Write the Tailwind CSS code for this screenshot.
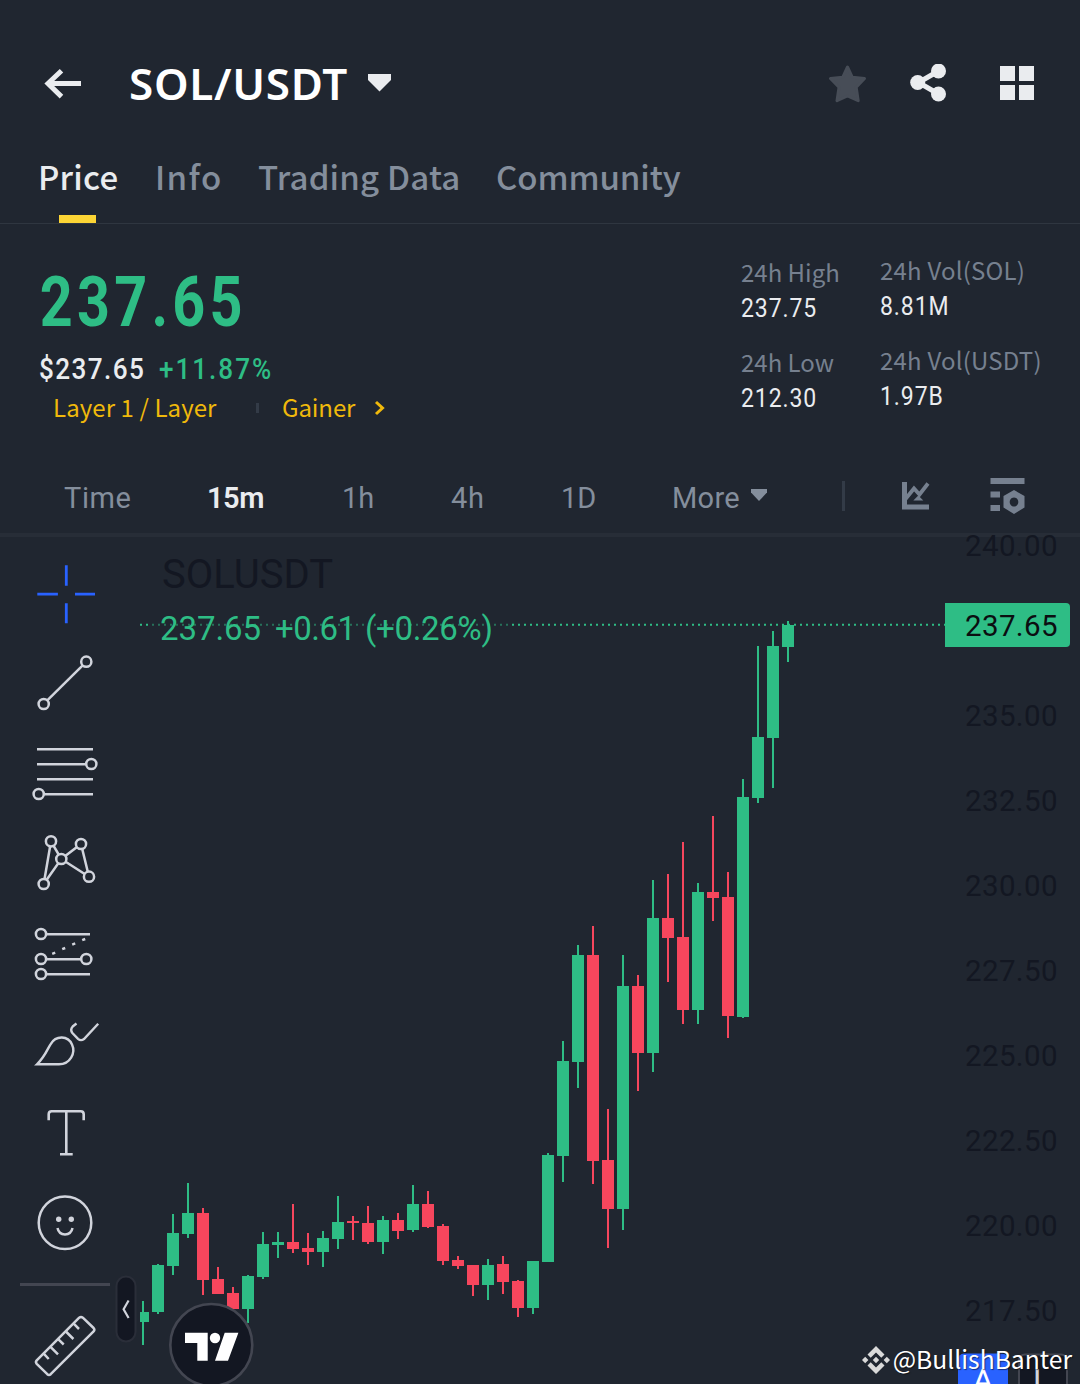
<!DOCTYPE html>
<html lang="en">
<head>
    <meta charset="UTF-8">
    <meta name="viewport" content="width=device-width, initial-scale=1.0">
    <title>SOL/USDT</title>
    <script src="https://cdn.jsdelivr.net/npm/@tailwindcss/browser@4"></script>
</head>
<body class="bg-[#202630] text-[#eaecef] w-[1080px] h-[1384px] overflow-hidden font-['Noto_Sans_CJK_SC',sans-serif]">
    <!-- Header -->
    <header class="flex items-center h-[140px] pt-[26px] pl-11 pr-[46px]">
        <svg class="mt-px w-[38px] h-[30px]" viewBox="0 0 38 30" fill="none" stroke="#eaecef" stroke-width="5">
            <path d="M37 14.5H5M17.5 1.8L4 14.5L17.5 27.6"/>
        </svg>
        <h1 class="ml-[47px] w-[239px] font-['Noto_Sans',sans-serif] text-[44px] leading-[56px] font-semibold text-white tracking-[0.7px]">SOL/USDT</h1>
        <svg class="w-6 h-[18px]" viewBox="0 0 24 18" fill="#eaecef"><path d="M0 0h23v6L11.5 17.5 0 6z"/></svg>
        <div class="ml-auto flex items-center">
            <svg class="mt-px w-[38px] h-[38px]" viewBox="0 0 38 38" fill="#474d57" stroke="#474d57" stroke-width="3" stroke-linejoin="round">
                <path d="M18.5 2l4.8 10.3 12.2 1.2-8.3 8.8 2 13.4L18.5 31 8 35.7l2-13.4L1.500 13.5l12.2-1.2z"/>
            </svg>
            <svg class="ml-[43px] w-[38px] h-[38px]" viewBox="0 0 38 38" fill="#eaecef">
                <path d="M28.500 7L8.500 18.500L28.500 30" fill="none" stroke="#eaecef" stroke-width="5"/>
                <circle cx="7.700" cy="18.500" r="7.500"/><circle cx="28.500" cy="7" r="7.500"/><circle cx="28.500" cy="30" r="7.500"/>
            </svg>
            <div class="ml-[52px] grid grid-cols-2 gap-1">
                <i class="size-[15px] bg-[#eaecef]"></i><i class="size-[15px] bg-[#eaecef]"></i>
                <i class="size-[15px] bg-[#eaecef]"></i><i class="size-[15px] bg-[#eaecef]"></i>
            </div>
        </div>
    </header>

    <!-- Tabs -->
    <nav class="flex h-[84px] pl-[38px] border-b border-[#2f3640] text-[33px] leading-[72px] font-medium text-[#848e9c]">
        <div class="relative w-[117px] text-[#eaecef] tracking-[0.2px]">Price<i class="absolute left-[21px] bottom-0 w-[37px] h-2 bg-[#fcd535]"></i></div>
        <div class="w-[103px] tracking-[1.4px]">Info</div>
        <div class="w-[238px] tracking-[0.2px]">Trading Data</div>
        <div class="tracking-[-0.1px]">Community</div>
    </nav>

    <!-- Price summary -->
    <section class="flex h-[236px] pl-[39px]">
        <div class="w-[702px] pt-[38px]">
            <div class="font-[Roboto,sans-serif] font-bold text-[71px] leading-[80px] tracking-[5.2px] text-[#2ebd85] origin-left scale-x-[.81] pl-px">237.65</div>
            <div class="flex mt-[9px] font-[Roboto,sans-serif] font-medium text-[29px] leading-[36px]">
                <div class="w-[120px] tracking-[1.6px] origin-left scale-x-[.9]">$237.65</div>
                <div class="tracking-[2.2px] origin-left scale-x-[.9] text-[#2ebd85]">+11.87%</div>
            </div>
            <div class="flex items-center h-[42px] pl-[14px] text-[24px] leading-[42px] tracking-[0.1px] text-[#f0b90b]">
                <div class="w-[203px] -mt-[2px]">Layer 1 / Layer</div>
                <i class="w-[3px] h-[10px] bg-[#333b47]"></i>
                <div class="ml-[23px] w-[92px] -mt-[2px] tracking-[-0.1px]">Gainer</div>
                <svg class="w-3 h-4" viewBox="0 0 12 16" fill="none" stroke="#f0b90b" stroke-width="3"><path d="M2 2l6.5 6L2 14"/></svg>
            </div>
        </div>
        <div class="w-[139px] pt-[30px]">
            <div class="text-[24px] leading-[36px] text-[#76808f]">24h High</div>
            <div class="mt-[2px] font-[Roboto,sans-serif] text-[25px] leading-[34px] h-[52px] tracking-[1px] origin-left scale-x-[.92]">237.75</div>
            <div class="text-[24px] leading-[36px] text-[#76808f]">24h Low</div>
            <div class="mt-[2px] font-[Roboto,sans-serif] text-[25px] leading-[34px] tracking-[1px] origin-left scale-x-[.92]">212.30</div>
        </div>
        <div class="pt-[28px] tracking-[0.2px]">
            <div class="text-[24px] leading-[36px] text-[#76808f]">24h Vol(SOL)</div>
            <div class="mt-[2px] font-[Roboto,sans-serif] text-[25px] leading-[34px] h-[52px] tracking-[1px] origin-left scale-x-[.92]">8.81M</div>
            <div class="text-[24px] leading-[36px] text-[#76808f]">24h Vol(USDT)</div>
            <div class="mt-[2px] font-[Roboto,sans-serif] text-[25px] leading-[34px] tracking-[1px] origin-left scale-x-[.92]">1.97B</div>
        </div>
    </section>

    <!-- Interval bar -->
    <div class="flex items-center h-[77px] pl-16 border-b-4 border-[#272d37] font-[Roboto,sans-serif] text-[29px] leading-[70px] text-[#848e9c] tracking-[0.6px]">
        <div class="w-[143px] pt-[3px]">Time</div>
        <div class="w-[135px] pt-[3px] font-semibold text-[#eaecef] tracking-[-0.5px]">15m</div>
        <div class="w-[109px] pt-[3px] tracking-[0px]">1h</div>
        <div class="w-[110px] pt-[3px]">4h</div>
        <div class="w-[111px] pt-[3px] tracking-[0px]">1D</div>
        <div class="w-[79px] pt-[3px] tracking-[0.3px]">More</div>
        <svg class="mb-[3px] w-4 h-3" viewBox="0 0 16 12" fill="#848e9c"><path d="M0 0h16v3.5L8 12 0 3.5z"/></svg>
        <i class="mb-[2px] ml-[75px] w-[3px] h-[30px] bg-[#333b47]"></i>
        <svg class="mb-[2px] ml-[57px] w-7 h-7" viewBox="0 0 28 28" fill="none" stroke="#76808f">
            <path d="M2.5 0v25H27" stroke-width="5"/>
            <path d="M3.5 17L12 6.5l5.5 6L26 1.5" stroke-width="3.8"/>
            <path d="M16.3 13.5l5 5h-10z" fill="#76808f" stroke="none"/>
        </svg>
        <svg class="mb-px ml-[60px] w-[35px] h-9" viewBox="0 0 35 36" fill="#76808f">
            <path d="M.5 0h34v6H.5zM.5 13.5H10v6H.5zM.5 27H10v6H.5z"/>
            <path fill-rule="evenodd" d="M24 12l10.5 6v11.5L24 36l-10.5-6.5V18zM24 19.5a4.3 4.5 0 1 0 .01 0z"/>
        </svg>
    </div>

    <main class="relative flex h-[847px]">
        <!-- Drawing tools -->
        <aside class="w-[140px] shrink-0 pt-3 pl-5">
            <svg class="block size-[90px]" viewBox="0 0 90 90" stroke="#2962ff" stroke-width="2.8"><path d="M46.3 16.3v20.4M46.3 54.3v20M17.3 45.2h20.6M55 45.2h20"/></svg>
            <svg class="block size-[90px]" viewBox="0 0 90 90" fill="none" stroke="#d1d4dc" stroke-width="2.5"><circle cx="66.3" cy="22.7" r="5.1"/><circle cx="23.7" cy="65" r="5.1"/><path d="M27.3 61.4L62.7 26.3"/></svg>
            <svg class="block size-[90px]" viewBox="0 0 90 90" fill="none" stroke="#d1d4dc" stroke-width="2.5"><path d="M17 20.2h56M17 35.2h49M17 50.2h56M24 65.2h49"/><circle cx="71.3" cy="35" r="5.1"/><circle cx="18.7" cy="65" r="5.1"/></svg>
            <svg class="block size-[90px]" viewBox="0 0 90 90" fill="none" stroke="#d1d4dc" stroke-width="2.5">
                <path d="M31 22.3L23.7 65L41.3 40zM41.3 40L61 25L69 57.7z"/>
                <g fill="#202630"><circle cx="31" cy="22.3" r="5.1"/><circle cx="61" cy="25" r="5.1"/><circle cx="41.3" cy="40" r="5.1"/><circle cx="69" cy="57.7" r="5.1"/><circle cx="23.7" cy="65" r="5.1"/></g>
            </svg>
            <svg class="block size-[90px]" viewBox="0 0 90 90" fill="none" stroke="#d1d4dc" stroke-width="2.5">
                <path d="M26 25.2h44M26 50.2h35M26 65.2h44"/>
                <circle cx="21" cy="25" r="5.1"/><circle cx="21" cy="50" r="5.1"/><circle cx="66.3" cy="50" r="5.1"/><circle cx="21" cy="65" r="5.1"/>
                <path d="M32.2 44.8l3-1.2M42.2 40.2l3-1.2M52.2 35.6l3-1.2M62.2 31.2l3-1.2"/>
            </svg>
            <svg class="block size-[90px]" viewBox="0 0 90 90" fill="none" stroke="#d1d4dc" stroke-width="2.4">
                <path d="M17 65.3C25 57.5 27.5 50 30.5 45.3C36 36 48 36.5 52 45.5C56 54 50 65.3 39 65.3z"/>
                <path d="M56.5 24.5l-3.8 3c-1.8 2-1.8 4.5-.3 6.5l5.6 5.8c2 1.8 4 1.7 6 .2L78.2 24.7"/>
            </svg>
            <svg class="block size-[90px]" viewBox="0 0 90 90" fill="none" stroke="#d1d4dc" stroke-width="2.6"><path d="M28.7 31.3v-6c0-2 1-3 3-3h29c2 0 3 1 3 3v6M46.3 22.3v43M40 65.3h12.7"/></svg>
            <svg class="block size-[90px]" viewBox="0 0 90 90" fill="none" stroke="#d1d4dc" stroke-width="2.5"><circle cx="45" cy="43.7" r="26.3"/><path d="M37.5 49c1.7 8.5 13.3 8.5 15 0"/><g fill="#d1d4dc" stroke="none"><circle cx="38.7" cy="40.2" r="2.7"/><circle cx="51.3" cy="40.2" r="2.7"/></g></svg>
            <div class="mt-[14px] mb-[15px] h-[3px] w-[90px] bg-[#434651]"></div>
            <svg class="block size-[90px]" viewBox="0 0 90 90" fill="none" stroke="#d1d4dc" stroke-width="2.5" stroke-linejoin="round">
                <path d="M59.2 16.7q1.8-1.5 3.6 0L73.6 27q1.5 1.7 0 3.4L30.7 73.2q-1.7 1.5-3.4 0L16.7 62.8q-1.5-1.7 0-3.4z"/>
                <path d="M23.7 52.6l5 5.4M30.5 45.8l7.5 7.5M38.2 38.2l5.5 5.3M45.9 30.5l7.5 7.5M53.7 22.7l5.3 5.3"/>
            </svg>
        </aside>

        <!-- Chart, drawn in page coordinates -->
        <svg class="block w-[940px] h-[847px] overflow-visible font-[Roboto,sans-serif]" viewBox="140 537 940 847">
            <path d="M140 624.8H945" stroke="#2ebd85" stroke-width="2" stroke-dasharray="2 4"/>
            <rect x="152" y="600" width="358" height="50" fill="#202630" opacity=".5"/>
            <text x="162" y="588" font-size="40" fill="#131722" textLength="171">SOLUSDT</text>
            <g font-size="33" fill="#2ebd85">
                <text x="160" y="640" textLength="101">237.65</text>
                <text x="275" y="640" textLength="81">+0.61</text>
                <text x="365" y="640" textLength="128">(+0.26%)</text>
            </g>
            <g id="axis" font-size="29.5" fill="#131722"></g>
            <g id="candles" shape-rendering="crispEdges"></g>
            <path d="M945 603h121q4 0 4 4v36q0 4-4 4H945z" fill="#2ebd85"/>
            <text x="965" y="636" font-size="29.5" fill="#0b0e11" textLength="92.5">237.65</text>
            <!-- collapse handle -->
            <rect x="116.5" y="1276.5" width="19" height="65" rx="9.5" fill="#131722" stroke="#2a2e39" stroke-width="2"/>
            <path d="M128.6 1300.5L123.6 1309.3L128.6 1318" fill="none" stroke="#d1d4dc" stroke-width="2.2"/>
            <!-- TradingView badge -->
            <circle cx="211.3" cy="1345" r="41" fill="#131722" stroke="#434651" stroke-width="2.6"/>
            <g fill="#fff">
                <path d="M185 1332.7h22.7v28h-10.4V1343H185zM224.7 1332.7h13.7L228 1360.7h-13z"/>
                <circle cx="215" cy="1338" r="5.2"/>
            </g>
            <!-- scale buttons -->
            <rect x="958" y="1353.5" width="50" height="50" rx="6" fill="#2962ff"/>
            <text x="983" y="1391" font-size="32" fill="#fff" text-anchor="middle">A</text>
            <rect x="1019" y="1354.5" width="48" height="48" rx="6" fill="#131722" stroke="#434651" stroke-width="2"/>
            <text x="1033" y="1391" font-size="32" fill="#d1d4dc">L</text>
        </svg>

        <!-- Watermark -->
        <div class="absolute right-2 bottom-[2px] h-12 flex items-center gap-[3px] text-white">
            <svg class="mt-1 w-7 h-7" viewBox="0 0 28 28" fill="#d9d9d9">
                <path d="M14 0l8.5 8.5-3.2 3.2L14 6.4l-5.3 5.3-3.2-3.2zM14 28l8.5-8.5-3.2-3.2L14 21.6l-5.3-5.3-3.2 3.2zM14 10.8l3.2 3.2-3.2 3.2-3.2-3.2zM3.2 10.8L6.4 14l-3.2 3.2L0 14zM24.8 10.8L28 14l-3.2 3.2-3.2-3.2z"/>
            </svg>
            <span class="text-[24.7px] leading-[48px] [text-shadow:1px_1px_1px_rgba(0,0,0,.5)]">@BullishBanter</span>
        </div>
    </main>

    <script>
        const UP = '#2ebd85';
        const DOWN = '#f6465d';

        // [direction, high, body top, body bottom, low], one every 15px
        const candles = [
            [1, 1301, 1312, 1322, 1345], [1, 1263.5, 1265, 1312, 1314], [1, 1213.5, 1233, 1266, 1275],
            [1, 1183, 1212.5, 1234, 1238], [0, 1208, 1212.5, 1280, 1295], [0, 1267, 1279, 1294, 1294],
            [0, 1287, 1293, 1309, 1309], [1, 1275, 1276, 1309, 1323], [1, 1232, 1244, 1277, 1279],
            [1, 1232, 1242, 1245, 1258], [0, 1204, 1242, 1249, 1253], [0, 1233, 1248, 1252, 1265],
            [1, 1231, 1238, 1252, 1267], [1, 1196, 1222, 1239, 1249], [0, 1216, 1221, 1223, 1240],
            [0, 1206, 1223, 1242, 1244], [1, 1216, 1220, 1242, 1254], [0, 1213, 1220, 1231, 1239],
            [1, 1185, 1204, 1230, 1232], [0, 1191, 1204, 1227, 1228], [0, 1224, 1226, 1261, 1265],
            [0, 1256, 1260, 1266, 1269], [0, 1265, 1265, 1285, 1296], [1, 1259, 1265, 1285, 1300],
            [0, 1256, 1264, 1282, 1294], [0, 1280, 1281, 1308, 1317], [1, 1261, 1261, 1308, 1314],
            [1, 1153, 1155, 1262, 1262], [1, 1041, 1061, 1156, 1182], [1, 945, 955, 1062, 1088],
            [0, 926, 955, 1161, 1184], [0, 1109, 1160, 1209, 1248], [1, 955, 986, 1209, 1230],
            [0, 975, 986, 1053, 1091], [1, 880, 918, 1053, 1072], [0, 874, 918, 938, 982],
            [0, 842, 937, 1010, 1024], [1, 883, 892, 1010, 1024], [0, 816, 892, 898, 921],
            [0, 872, 897, 1016, 1038], [1, 779, 797, 1017, 1018], [1, 646, 737, 798, 803],
            [1, 631, 646, 738, 788], [1, 621, 625, 647, 662]
        ];

        document.getElementById('candles').innerHTML = candles.map(([up, high, top, bottom, low], i) => {
            const x = 143 + i * 15;
            const left = Math.max(x - 6, 140);
            return `<g fill="${up ? UP : DOWN}">
                <rect x="${x - 1}" y="${high}" width="2" height="${low - high}"/>
                <rect x="${left}" y="${top}" width="${x + 6 - left}" height="${bottom - top}"/>
            </g>`;
        }).join('');

        const prices = [['240.00', 556], ['235.00', 726], ['232.50', 811], ['230.00', 896], ['227.50', 981],
            ['225.00', 1066], ['222.50', 1151], ['220.00', 1236], ['217.50', 1321]];
        document.getElementById('axis').innerHTML = prices.map(([label, y]) =>
            `<text x="965" y="${y}" textLength="92.5">${label}</text>`).join('');
    </script>
</body>
</html>
